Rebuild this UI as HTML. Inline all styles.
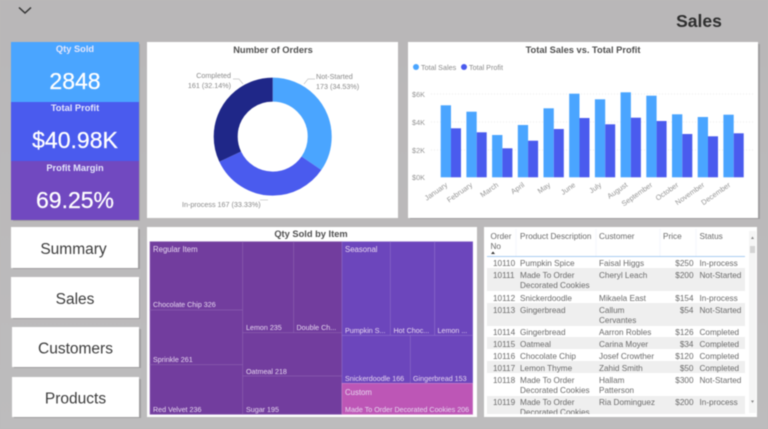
<!DOCTYPE html>
<html>
<head>
<meta charset="utf-8">
<style>
html,body{margin:0;padding:0;width:768px;height:429px;overflow:hidden;background:#bbb9ba}
svg{display:block;filter:blur(.5px)}
text{font-family:"Liberation Sans",sans-serif}
.t{font-size:9.300px;font-weight:bold;fill:#505050;text-anchor:middle}
.k{font-size:9.300px;font-weight:bold;fill:#e4e6fb;text-anchor:middle}
.v{font-size:23px;fill:#fff;stroke:#fff;stroke-width:.25;text-anchor:middle}
.g{font-size:7.200px;fill:#8a8a8a}
.a{font-size:7.300px;fill:#959595;text-anchor:end}
.n{font-size:15.500px;fill:#3c3c3c;text-anchor:middle}
.m{font-size:7.150px;fill:#e6d6f0}
.h{font-size:7.800px;fill:#e6d6f0}
.d{font-size:8.200px;fill:#6a6a6a}
.r{text-anchor:end}
.c{fill:#723d9e;stroke:#8a5eb0;stroke-width:.6}
.s{fill:#6c46bc;stroke:#8d6cca;stroke-width:.6}
</style>
</head>
<body>
<svg width="768" height="429" viewBox="0 0 768 429" xmlns="http://www.w3.org/2000/svg">
<defs>
<linearGradient id="bg" x1="0" y1="0" x2="0" y2="1"><stop offset="0" stop-color="#b9b7b8"/><stop offset="1" stop-color="#bdbcbd"/></linearGradient>
<clipPath id="tc"><rect x="487" y="396" width="258" height="18"/></clipPath>
</defs>
<rect width="768" height="429" fill="url(#bg)"/>

<path d="M19 7.500L25 13 31 7.500" fill="none" stroke="#333" stroke-width="1.500"/>
<text x="699" y="27" font-size="17.500" font-weight="bold" fill="#2f2f2f" text-anchor="middle">Sales</text>

<!-- shadows -->
<g fill="#a09fa0">
<rect x="13" y="44" width="127" height="177"/>
<rect x="13" y="229" width="127" height="40"/>
<rect x="13" y="279" width="127" height="40"/>
<rect x="14" y="329" width="127" height="39"/>
<rect x="14" y="379" width="127" height="39"/>
<rect x="410" y="44" width="350" height="175"/>
</g>

<!-- KPI -->
<rect x="11" y="42" width="128" height="60" fill="#4aa5ff"/>
<rect x="11" y="102" width="128" height="59" fill="#4a5bee"/>
<rect x="11" y="161" width="128" height="59" fill="#7149c0"/>
<text class="k" x="75" y="52">Qty Sold</text>
<text class="v" x="75" y="89">2848</text>
<text class="k" x="75" y="111">Total Profit</text>
<text class="v" x="75" y="148">$40.98K</text>
<text class="k" x="75" y="171">Profit Margin</text>
<text class="v" x="75" y="208">69.25%</text>

<!-- Donut panel -->
<rect x="147" y="42" width="251" height="176" fill="#fff"/>
<text class="t" x="273" y="53">Number of Orders</text>
<g fill="none" stroke-width="24" transform="rotate(-90 272.700 136.600)">
<circle cx="272.700" cy="136.600" r="47" stroke="#4aa5ff" stroke-dasharray="102 295.300"/>
<circle cx="272.700" cy="136.600" r="47" stroke="#4a5bee" stroke-dasharray="98.400 295.300" stroke-dashoffset="-102"/>
<circle cx="272.700" cy="136.600" r="47" stroke="#1f2788" stroke-dasharray="94.900 295.300" stroke-dashoffset="-200.400"/>
</g>
<g fill="none" stroke="#c4c4c4" stroke-width=".7">
<path d="M304 84L308 79H315"/>
<path d="M243 84L239 79H233"/>
<path d="M268 200H260"/>
</g>
<text class="g" x="316" y="79">Not-Started</text>
<text class="g" x="316" y="89">173 (34.53%)</text>
<text class="g" x="231" y="78" text-anchor="end">Completed</text>
<text class="g" x="231" y="88" text-anchor="end">161 (32.14%)</text>
<text class="g" x="182" y="207">In-process 167 (33.33%)</text>

<!-- Bar panel -->
<rect x="408" y="42" width="350" height="176" fill="#fff"/>
<text class="t" x="583" y="53">Total Sales vs. Total Profit</text>
<circle cx="416" cy="67" r="3" fill="#4aa5ff"/>
<text class="g" x="421" y="70">Total Sales</text>
<circle cx="464" cy="67" r="3" fill="#4a5bee"/>
<text class="g" x="469" y="70">Total Profit</text>
<g stroke="#e8e8e8" stroke-width=".7" stroke-dasharray="1 2">
<line x1="431" x2="754" y1="94" y2="94"/>
<line x1="431" x2="754" y1="122" y2="122"/>
<line x1="431" x2="754" y1="150" y2="150"/>
</g>
<text class="a" x="425" y="97">$6K</text>
<text class="a" x="425" y="125">$4K</text>
<text class="a" x="425" y="153">$2K</text>
<text class="a" x="425" y="180">$0K</text>
<g fill="#4aa5ff">
<rect x="440.700" y="105.300" width="10.300" height="72"/>
<rect x="466.400" y="111.700" width="10.300" height="65.600"/>
<rect x="492.100" y="135" width="10.300" height="42.300"/>
<rect x="517.800" y="125" width="10.300" height="52.300"/>
<rect x="543.500" y="108.300" width="10.300" height="69"/>
<rect x="569.200" y="93.700" width="10.300" height="83.600"/>
<rect x="594.900" y="99.300" width="10.300" height="78"/>
<rect x="620.600" y="92.300" width="10.300" height="85"/>
<rect x="646.300" y="95.700" width="10.300" height="81.600"/>
<rect x="672" y="114.300" width="10.300" height="63"/>
<rect x="697.700" y="117" width="10.300" height="60.300"/>
<rect x="723.400" y="114.700" width="10.300" height="62.600"/>
</g>
<g fill="#4a5bee">
<rect x="451" y="128.300" width="10" height="49"/>
<rect x="476.700" y="132.300" width="10" height="45"/>
<rect x="502.400" y="148.300" width="10" height="29"/>
<rect x="528.100" y="140.700" width="10" height="36.600"/>
<rect x="553.800" y="129" width="10" height="48.300"/>
<rect x="579.500" y="118" width="10" height="59.300"/>
<rect x="605.200" y="124.300" width="10" height="53"/>
<rect x="630.900" y="117.700" width="10" height="59.600"/>
<rect x="656.600" y="121" width="10" height="56.300"/>
<rect x="682.300" y="134" width="10" height="43.300"/>
<rect x="708" y="136.300" width="10" height="41"/>
<rect x="733.700" y="133.300" width="10" height="44"/>
</g>
<text class="a" transform="translate(448 186) rotate(-35)">January</text>
<text class="a" transform="translate(473 186) rotate(-35)">February</text>
<text class="a" transform="translate(499 186) rotate(-35)">March</text>
<text class="a" transform="translate(525 186) rotate(-35)">April</text>
<text class="a" transform="translate(551 186) rotate(-35)">May</text>
<text class="a" transform="translate(576 186) rotate(-35)">June</text>
<text class="a" transform="translate(602 186) rotate(-35)">July</text>
<text class="a" transform="translate(628 186) rotate(-35)">August</text>
<text class="a" transform="translate(653 186) rotate(-35)">September</text>
<text class="a" transform="translate(679 186) rotate(-35)">October</text>
<text class="a" transform="translate(705 186) rotate(-35)">November</text>
<text class="a" transform="translate(731 186) rotate(-35)">December</text>

<!-- Nav -->
<rect x="11" y="227" width="127" height="41" fill="#fff"/>
<rect x="11" y="277" width="128" height="41" fill="#fff"/>
<rect x="12" y="327" width="127" height="40" fill="#fff"/>
<rect x="12" y="377" width="127" height="40" fill="#fff"/>
<text class="n" x="73.500" y="254">Summary</text>
<text class="n" x="75" y="304">Sales</text>
<text class="n" x="75.500" y="353.500">Customers</text>
<text class="n" x="75.500" y="403.500">Products</text>

<!-- Treemap -->
<rect x="147" y="227" width="330" height="190" fill="#fff"/>
<text class="t" x="311" y="237">Qty Sold by Item</text>
<rect class="c" x="150" y="241.700" width="92.700" height="68.300"/>
<rect class="c" x="150" y="310" width="92.700" height="54.700"/>
<rect class="c" x="150" y="364.700" width="92.700" height="49.600"/>
<rect class="c" x="242.700" y="241.700" width="51" height="91"/>
<rect class="c" x="293.700" y="241.700" width="48.300" height="91"/>
<rect class="c" x="242.700" y="332.700" width="99.300" height="43.300"/>
<rect class="c" x="242.700" y="376" width="99.300" height="38.300"/>
<rect class="s" x="342" y="241.700" width="48.300" height="93.700"/>
<rect class="s" x="390.300" y="241.700" width="44.400" height="93.700"/>
<rect class="s" x="434.700" y="241.700" width="38" height="93.700"/>
<rect class="s" x="342" y="335.400" width="68.300" height="48"/>
<rect class="s" x="410.300" y="335.400" width="62.400" height="48"/>
<rect x="342" y="383.400" width="130.700" height="31" fill="#bd56b6" stroke="#cf85cb" stroke-width=".6"/>
<text class="h" x="153" y="252">Regular Item</text>
<text class="m" x="153" y="307">Chocolate Chip 326</text>
<text class="m" x="153" y="362">Sprinkle 261</text>
<text class="m" x="153" y="412">Red Velvet 236</text>
<text class="m" x="246" y="330">Lemon 235</text>
<text class="m" x="296.500" y="330">Double Ch...</text>
<text class="m" x="246" y="374">Oatmeal 218</text>
<text class="m" x="246" y="412">Sugar 195</text>
<text class="h" x="345" y="252">Seasonal</text>
<text class="m" x="345" y="333">Pumpkin S...</text>
<text class="m" x="393.500" y="333">Hot Choc...</text>
<text class="m" x="437.500" y="333">Lemon ...</text>
<text class="m" x="345" y="381">Snickerdoodle 166</text>
<text class="m" x="413" y="381">Gingerbread 153</text>
<text class="h" x="345" y="395">Custom</text>
<text class="m" x="345" y="412">Made To Order Decorated Cookies 206</text>

<!-- Table -->
<rect x="484" y="227" width="273" height="190" fill="#fff"/>
<g fill="#efefef">
<rect x="487" y="268" width="258" height="23"/>
<rect x="487" y="303" width="258" height="23"/>
<rect x="487" y="337" width="258" height="12"/>
<rect x="487" y="361" width="258" height="12"/>
<rect x="487" y="396" width="258" height="18"/>
</g>
<rect x="749" y="231" width="7" height="182" fill="#f5f5f5"/>
<rect x="750" y="246" width="5" height="7" fill="#d4d4d4"/>
<path d="M751 239l1.500-2.500 1.500 2.500zM751 400.500l1.500 2.500 1.500-2.500z" fill="#888"/>
<line x1="487" x2="745" y1="256.500" y2="256.500" stroke="#a9cdf2" stroke-width="1"/>
<g stroke="#eef3fb" stroke-width=".7">
<line x1="516" x2="516" y1="229" y2="256"/>
<line x1="596" x2="596" y1="229" y2="256"/>
<line x1="660" x2="660" y1="229" y2="256"/>
<line x1="696" x2="696" y1="229" y2="256"/>
</g>
<path d="M491 254l2-2.500 2 2.500z" fill="#333"/>
<text class="d" x="490.500" y="239">Order</text>
<text class="d" x="490.500" y="249">No</text>
<text class="d" x="520" y="239">Product Description</text>
<text class="d" x="599" y="239">Customer</text>
<text class="d" x="663" y="239">Price</text>
<text class="d" x="699.500" y="239">Status</text>

<text class="d" x="493" y="266">10110</text><text class="d" x="520" y="266">Pumpkin Spice</text><text class="d" x="599" y="266">Faisal Higgs</text><text class="d r" x="693.500" y="266">$250</text><text class="d" x="699.500" y="266">In-process</text>
<text class="d" x="493" y="278">10111</text><text class="d" x="520" y="278">Made To Order</text><text class="d" x="520" y="288">Decorated Cookies</text><text class="d" x="599" y="278">Cheryl Leach</text><text class="d r" x="693.500" y="278">$200</text><text class="d" x="699.500" y="278">Not-Started</text>
<text class="d" x="493" y="301">10112</text><text class="d" x="520" y="301">Snickerdoodle</text><text class="d" x="599" y="301">Mikaela East</text><text class="d r" x="693.500" y="301">$154</text><text class="d" x="699.500" y="301">In-process</text>
<text class="d" x="493" y="313">10113</text><text class="d" x="520" y="313">Gingerbread</text><text class="d" x="599" y="313">Callum</text><text class="d" x="599" y="323">Cervantes</text><text class="d r" x="693.500" y="313">$54</text><text class="d" x="699.500" y="313">Not-Started</text>
<text class="d" x="493" y="335">10114</text><text class="d" x="520" y="335">Gingerbread</text><text class="d" x="599" y="335">Aarron Robles</text><text class="d r" x="693.500" y="335">$126</text><text class="d" x="699.500" y="335">Completed</text>
<text class="d" x="493" y="347">10115</text><text class="d" x="520" y="347">Oatmeal</text><text class="d" x="599" y="347">Carina Moyer</text><text class="d r" x="693.500" y="347">$34</text><text class="d" x="699.500" y="347">Completed</text>
<text class="d" x="493" y="359">10116</text><text class="d" x="520" y="359">Chocolate Chip</text><text class="d" x="599" y="359">Josef Crowther</text><text class="d r" x="693.500" y="359">$120</text><text class="d" x="699.500" y="359">Completed</text>
<text class="d" x="493" y="371">10117</text><text class="d" x="520" y="371">Lemon Thyme</text><text class="d" x="599" y="371">Zahid Smith</text><text class="d r" x="693.500" y="371">$50</text><text class="d" x="699.500" y="371">Completed</text>
<text class="d" x="493" y="383">10118</text><text class="d" x="520" y="383">Made To Order</text><text class="d" x="520" y="393">Decorated Cookies</text><text class="d" x="599" y="383">Hallam</text><text class="d" x="599" y="393">Patterson</text><text class="d r" x="693.500" y="383">$300</text><text class="d" x="699.500" y="383">Not-Started</text>
<text class="d" x="493" y="405">10119</text><text class="d" x="520" y="405">Made To Order</text><text class="d" x="599" y="405">Ria Dominguez</text><text class="d r" x="693.500" y="405">$200</text><text class="d" x="699.500" y="405">In-process</text>
<text class="d" x="520" y="415" clip-path="url(#tc)">Decorated Cookies</text>
</svg>
</body>
</html>
